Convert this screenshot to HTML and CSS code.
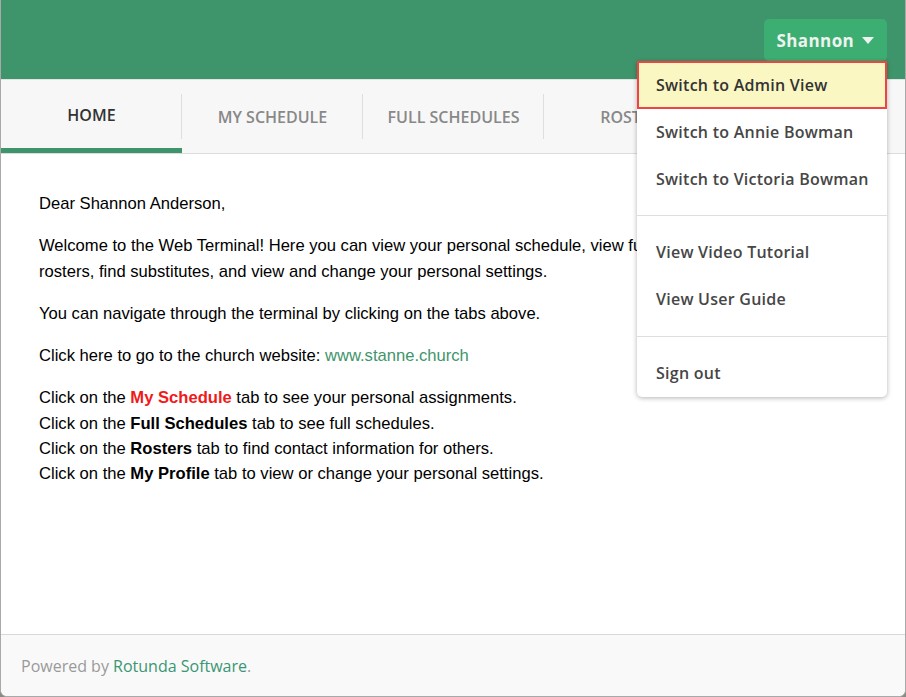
FILE: index.html
```html
<!DOCTYPE html>
<html lang="en">
<head>
    <meta charset="UTF-8">
    <meta name="viewport" content="width=device-width, initial-scale=1.0">
    <title>Web Terminal</title>
    <link rel="stylesheet" href="styles.css">
</head>
<body>
    <div class="terminal">
        <div class="header">
            <div class="user-menu">
                <button class="user-button">Shannon <span class="caret"></span></button>
                <div class="dropdown">
                    <div class="menu-group first">
                        <a class="menu-item active" href="#">Switch to Admin View</a>
                        <a class="menu-item" href="#">Switch to Annie Bowman</a>
                        <a class="menu-item" href="#">Switch to Victoria Bowman</a>
                    </div>
                    <div class="menu-group">
                        <a class="menu-item" href="#">View Video Tutorial</a>
                        <a class="menu-item" href="#">View User Guide</a>
                    </div>
                    <div class="menu-group last">
                        <a class="menu-item" href="#">Sign out</a>
                    </div>
                </div>
            </div>
        </div>
        <div class="tabs">
            <a class="tab active" href="#">HOME</a>
            <a class="tab" href="#">MY SCHEDULE</a>
            <a class="tab" href="#">FULL SCHEDULES</a>
            <a class="tab" href="#">ROSTERS</a>
            <a class="tab" href="#">MY PROFILE</a>
        </div>
        <div class="content">
            <p>Dear Shannon Anderson,</p>
            <p>Welcome to the Web Terminal! Here you can view your personal schedule, view full schedules and rosters, find substitutes, and view and change your personal settings.</p>
            <p>You can navigate through the terminal by clicking on the tabs above.</p>
            <p>Click here to go to the church website: <a class="site-link" href="#">www.stanne.church</a></p>
            <p>
                Click on the <b class="red">My Schedule</b> tab to see your personal assignments.<br>
                Click on the <b>Full Schedules</b> tab to see full schedules.<br>
                Click on the <b>Rosters</b> tab to find contact information for others.<br>
                Click on the <b>My Profile</b> tab to view or change your personal settings.
            </p>
        </div>
        <div class="footer">
            <span>Powered by <a href="#">Rotunda Software</a>.</span>
        </div>
    </div>
</body>
</html>
```

FILE: styles.css
```css
html, body {
    margin: 0;
    padding: 0;
    background: #8a8a84;
}
.terminal {
    width: 904px;
    height: 696px;
    display: flex;
    flex-direction: column;
    background: #fff;
    border-left: 1px solid #a9a9a9;
    border-right: 1px solid #a9a9a9;
    border-bottom: 1px solid #a9a9a9;
    border-radius: 0 0 7px 7px;
    overflow: hidden;
}
.header {
    height: 79px;
    flex: none;
    background: #3f956b;
    border-bottom: 1px solid #e3e3e3;
    position: relative;
}
.user-menu {
    position: absolute;
    top: 19px;
    right: 18px;
}
.user-button {
    display: block;
    margin-left: auto;
    height: 42px;
    padding: 0 13px;
    background: #3dae72;
    color: #eef3ef;
    border: none;
    border-radius: 5px;
    font-family: "Open Sans", sans-serif;
    font-weight: 700;
    font-size: 17px;
    letter-spacing: 0.4px;
    cursor: pointer;
}
.caret {
    display: inline-block;
    width: 0;
    height: 0;
    margin-left: 3px;
    vertical-align: 3px;
    border-left: 6px solid transparent;
    border-right: 6px solid transparent;
    border-top: 7px solid #eef3ef;
}
.dropdown {
    position: absolute;
    top: 42px;
    right: 0;
    width: 250px;
    background: #fff;
    border-radius: 0 0 5px 5px;
    box-shadow: 0 1px 5px rgba(0,0,0,0.3);
    z-index: 10;
}
.menu-group {
    padding: 13px 0;
    border-top: 1px solid #dedede;
}
.menu-group.first {
    padding-top: 0;
    padding-bottom: 12px;
    border-top: none;
}
.menu-group.last {
    padding-bottom: 0;
}
.menu-item {
    display: block;
    height: 47px;
    line-height: 47px;
    padding-left: 19px;
    color: #464646;
    text-decoration: none;
    font-family: "Open Sans", sans-serif;
    font-weight: 600;
    font-size: 16px;
    letter-spacing: 0.25px;
}
.menu-item.active {
    height: 44px;
    line-height: 44px;
    padding-left: 17px;
    background: #fbf7c3;
    border: 2px solid #f04444;
    color: #333;
}
.tabs {
    display: flex;
    height: 73px;
    flex: none;
    background: #f7f7f7;
    border-bottom: 1px solid #dcdcdc;
}
.tab {
    width: 181px;
    flex: none;
    display: flex;
    align-items: center;
    justify-content: center;
    position: relative;
    color: #888;
    text-decoration: none;
    font-family: "Open Sans", sans-serif;
    font-weight: 600;
    font-size: 16px;
    box-sizing: border-box;
}
.tab + .tab::before {
    content: "";
    position: absolute;
    left: -1px;
    top: 14px;
    bottom: 14px;
    border-left: 1px solid #dedede;
}
.tab.active {
    color: #333;
    border-bottom: 5px solid #3f956b;
    padding-top: 2px;
}
.content {
    flex: 1;
    padding: 20px 130px 0 38px;
    font-family: "Liberation Sans", Arial, sans-serif;
    font-size: 16.6px;
    line-height: 25.3px;
    color: #000;
}
.content p {
    margin: 17px 0;
}
.site-link {
    color: #3f956b;
    text-decoration: none;
}
.red {
    color: #f01a1a;
}
.footer {
    height: 61px;
    flex: none;
    display: flex;
    align-items: center;
    padding-left: 20px;
    background: #f9f9f9;
    border-top: 1px solid #d9d9d9;
    font-family: "Open Sans", sans-serif;
    font-weight: 400;
    font-size: 16px;
    color: #9a9a9a;
}
.footer a {
    color: #3a9674;
    text-decoration: none;
}
```
